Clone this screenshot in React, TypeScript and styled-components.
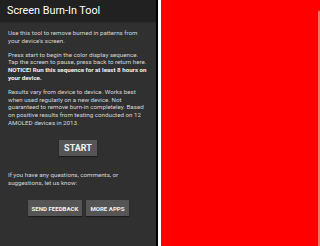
import React from "react";
import styled, { createGlobalStyle } from "styled-components";

const GlobalStyle = createGlobalStyle`
  html, body {
    margin: 0;
    padding: 0;
    background: #ffffff;
  }
  body {
    font-family: Roboto, "Liberation Sans", Arial, sans-serif;
  }
`;

const Screen = styled.div`
  display: flex;
  width: 320px;
  height: 246px;
  overflow: hidden;
`;

const Panel = styled.div`
  width: 156px;
  height: 100%;
  background: #303030;
  display: flex;
  flex-direction: column;
`;

const Header = styled.div`
  height: 21px;
  background: #212121;
  color: #ffffff;
  font-size: 10.8px;
  display: flex;
  align-items: center;
  padding-left: 7px;
  box-shadow: 0 1px 2px rgba(0, 0, 0, 0.4);
`;

const Body = styled.div`
  padding: 9px 8px 0 8px;
  display: flex;
  flex-direction: column;
`;

const Para = styled.div<{ $top?: number }>`
  margin: ${(p) => p.$top ?? 0}px 0 6px 0;
  color: #d6d6d6;
  font-size: 6.2px;
  line-height: 7.8px;
  white-space: nowrap;
`;

const Line = styled.div<{ $bold?: boolean }>`
  font-weight: ${(p) => (p.$bold ? "bold" : "normal")};
  color: ${(p) => (p.$bold ? "#f0f0f0" : "inherit")};
`;

const Center = styled.div<{ $top: number }>`
  display: flex;
  justify-content: center;
  gap: 4px;
  margin-top: ${(p) => p.$top}px;
`;

const Button = styled.div<{ $big?: boolean }>`
  background: #555555;
  color: #f2f2f2;
  font-weight: bold;
  font-size: ${(p) => (p.$big ? 9 : 6.1)}px;
  height: 16px;
  padding: 0 ${(p) => (p.$big ? 5 : 4)}px;
  display: flex;
  align-items: center;
  box-shadow: 0 1px 1px rgba(0, 0, 0, 0.4);
`;

const Divider = styled.div<{ $color: string; $w: number }>`
  width: ${(p) => p.$w}px;
  background: ${(p) => p.$color};
`;

const Red = styled.div`
  flex: 1;
  background: #ff0000;
`;

const Edge = styled.div`
  width: 2px;
  background: linear-gradient(#ff0000 0, #ff0000 10px, #ff7070 12px, #ff7070 100%);
`;

const paragraphs: { text: string; bold?: boolean }[][] = [
  [
    { text: "Use this tool to remove burned in patterns from" },
    { text: "your device's screen." },
  ],
  [
    { text: "Press start to begin the color display sequence." },
    { text: "Tap the screen to pause, press back to return here." },
    { text: "NOTICE! Run this sequence for at least 8 hours on", bold: true },
    { text: "your device.", bold: true },
  ],
  [
    { text: "Results vary from device to device. Works best" },
    { text: "when used regularly on a new device. Not" },
    { text: "guaranteed to remove burn-in completeley. Based" },
    { text: "on positive results from testing conducted on 12" },
    { text: "AMOLED devices in 2013." },
  ],
];

export default function App() {
  return (
    <>
      <GlobalStyle />
      <Screen>
        <Panel>
          <Header>Screen Burn-In Tool</Header>
          <Body>
            {paragraphs.map((lines, i) => (
              <Para key={i}>
                {lines.map((l) => (
                  <Line key={l.text} $bold={l.bold}>
                    {l.text}
                  </Line>
                ))}
              </Para>
            ))}
            <Center $top={6}>
              <Button $big>START</Button>
            </Center>
            <Para $top={16}>
              <Line>If you have any questions, comments, or</Line>
              <Line>suggestions, let us know:</Line>
            </Para>
            <Center $top={7}>
              <Button>SEND FEEDBACK</Button>
              <Button>MORE APPS</Button>
            </Center>
          </Body>
        </Panel>
        <Divider $color="#000000" $w={2} />
        <Divider $color="#ffffff" $w={3} />
        <Red />
        <Edge />
      </Screen>
    </>
  );
}
